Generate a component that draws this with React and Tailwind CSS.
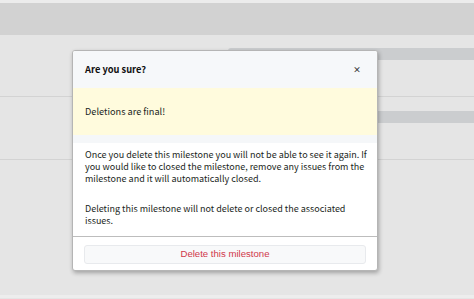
export default function App() {
  const sans = { fontFamily: '"Noto Sans CJK KR", "Noto Sans", sans-serif' };
  return (
    <div className="relative w-[474px] h-[299px] overflow-hidden bg-[#e5e5e5]">
      <div className="h-[3px] bg-[#ececec]" />
      <div className="h-[32px] bg-[#d2d2d2]" />
      <div className="h-[62px] border-b border-[#d3d3d3] pt-[13px]">
        <div className="ml-[228px] h-[12px] rounded-l-[3px] bg-[#cbcdcf]" />
      </div>
      <div className="h-[63px] border-b border-[#d3d3d3] pt-[14px]">
        <div className="ml-[200px] h-[12px] bg-[#cbcdcf]" />
      </div>
      <div className="h-[135px]" />
      <div className="h-[3px] bg-[#ededed]" />

      <div
        className="absolute left-[72px] top-[50px] w-[306px] h-[221px] flex flex-col rounded-[3px] border border-[#b5b5b5] bg-white overflow-hidden shadow-[1px_2px_4px_rgba(0,0,0,0.3)]"
        style={sans}
      >
        <div className="h-[37px] shrink-0 bg-[#f6f8fa] flex items-center justify-between pl-[12px] pr-[16px]">
          <span className="text-[9.3px] font-bold text-[#111]">Are you sure?</span>
          <span className="text-[8px] font-bold text-[#333] leading-none">×</span>
        </div>
        <div className="h-[47px] shrink-0 bg-[#fffbdd] flex items-center pl-[12px] text-[9.2px] text-[#1b1f23]">
          Deletions are final!
        </div>
        <div className="h-[8px] shrink-0 bg-[#f5f7f9]" />
        <div className="flex-1 pl-[12px] pr-[3px] pt-[6px] text-[9px] leading-[12px] text-[#1b1f23]">
          <p>
            Once you delete this milestone you will not be able to see it again. If you would like to closed the milestone, remove any issues from the milestone and it will automatically closed.
          </p>
          <p className="mt-[18px]">
            Deleting this milestone will not delete or closed the associated issues.
          </p>
        </div>
        <div className="h-[34px] shrink-0 border-t border-[#bdbdbd] px-[11px] pt-[8px]">
          <div
            className="h-[19px] rounded-[3px] border border-[#e8eaed] bg-[#f8f9fa] flex items-center justify-center text-[9.6px] text-[#d0384a]"
            style={{ fontFamily: '"Liberation Sans", Arial, sans-serif' }}
          >
            Delete this milestone
          </div>
        </div>
      </div>
    </div>
  );
}
